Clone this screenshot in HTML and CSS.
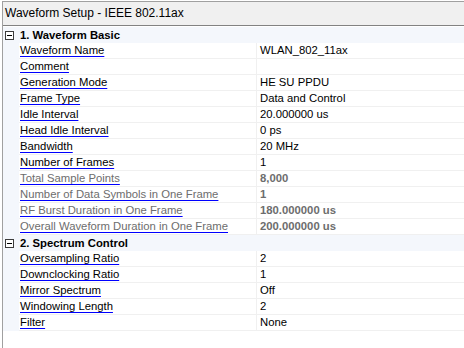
FILE: index.html
```html
<!DOCTYPE html>
<html>
<head>
<meta charset="utf-8">
<link rel="stylesheet" href="styles.css">
</head>
<body>
<div class="pane">
  <div class="title">Waveform Setup - IEEE 802.11ax</div>
  <div class="grid">
    <div class="cat"><span class="box"><span class="minus"></span></span><span class="cat-label">1. Waveform Basic</span></div>
    <div class="row"><div class="gutter"></div><div class="name"><span class="lbl">Waveform Name</span></div><div class="value">WLAN_802_11ax</div></div>
    <div class="row"><div class="gutter"></div><div class="name"><span class="lbl">Comment</span></div><div class="value"></div></div>
    <div class="row"><div class="gutter"></div><div class="name"><span class="lbl">Generation Mode</span></div><div class="value">HE SU PPDU</div></div>
    <div class="row"><div class="gutter"></div><div class="name"><span class="lbl">Frame Type</span></div><div class="value">Data and Control</div></div>
    <div class="row"><div class="gutter"></div><div class="name"><span class="lbl">Idle Interval</span></div><div class="value">20.000000 us</div></div>
    <div class="row"><div class="gutter"></div><div class="name"><span class="lbl">Head Idle Interval</span></div><div class="value">0 ps</div></div>
    <div class="row"><div class="gutter"></div><div class="name"><span class="lbl">Bandwidth</span></div><div class="value">20 MHz</div></div>
    <div class="row"><div class="gutter"></div><div class="name"><span class="lbl">Number of Frames</span></div><div class="value">1</div></div>
    <div class="row ro"><div class="gutter"></div><div class="name"><span class="lbl">Total Sample Points</span></div><div class="value">8,000</div></div>
    <div class="row ro"><div class="gutter"></div><div class="name"><span class="lbl">Number of Data Symbols in One Frame</span></div><div class="value">1</div></div>
    <div class="row ro"><div class="gutter"></div><div class="name"><span class="lbl">RF Burst Duration in One Frame</span></div><div class="value">180.000000 us</div></div>
    <div class="row ro"><div class="gutter"></div><div class="name"><span class="lbl">Overall Waveform Duration in One Frame</span></div><div class="value">200.000000 us</div></div>
    <div class="cat"><span class="box"><span class="minus"></span></span><span class="cat-label">2. Spectrum Control</span></div>
    <div class="row"><div class="gutter"></div><div class="name"><span class="lbl">Oversampling Ratio</span></div><div class="value">2</div></div>
    <div class="row"><div class="gutter"></div><div class="name"><span class="lbl">Downclocking Ratio</span></div><div class="value">1</div></div>
    <div class="row"><div class="gutter"></div><div class="name"><span class="lbl">Mirror Spectrum</span></div><div class="value">Off</div></div>
    <div class="row"><div class="gutter"></div><div class="name"><span class="lbl">Windowing Length</span></div><div class="value">2</div></div>
    <div class="row"><div class="gutter"></div><div class="name"><span class="lbl">Filter</span></div><div class="value">None</div></div>
  </div>
</div>
</body>
</html>
```
FILE: styles.css
```css
html, body {
  margin: 0;
  padding: 0;
  background: #ffffff;
}
body {
  font-family: "Liberation Sans", Arial, sans-serif;
  font-size: 11.3px;
  color: #000000;
}
.pane {
  margin-left: 2px;
  margin-top: 1px;
  height: 347px;
  border-left: 1px solid #a0a0a0;
  overflow: hidden;
}
.title {
  height: 23px;
  line-height: 23px;
  border-top: 1px solid #a0a0a0;
  border-bottom: 1px solid #828282;
  background: #f0f0f0;
  padding-left: 2px;
  font-size: 12px;
  white-space: nowrap;
}
.grid {
  display: flex;
  flex-direction: column;
  margin-top: 1px;
}
.cat {
  display: flex;
  align-items: flex-start;
  height: 16px;
  background: #f4f7fc;
}
.box {
  position: relative;
  box-sizing: border-box;
  width: 9px;
  height: 9px;
  margin: 4px 0 0 2px;
  border: 1px solid #3c3c3c;
  background: #ffffff;
  flex: none;
}
.minus {
  position: absolute;
  left: 1px;
  top: 3px;
  width: 5px;
  height: 1px;
  background: #000000;
}
.cat-label {
  margin-left: 6px;
  font-weight: bold;
  line-height: 16px;
  white-space: nowrap;
}
.row {
  display: flex;
  height: 16px;
}
.gutter {
  width: 16px;
  flex: none;
  background: #f4f7fc;
}
.name {
  box-sizing: border-box;
  width: 238px;
  flex: none;
  height: 16px;
  line-height: 15px;
  padding-left: 1px;
  border-bottom: 1px solid #f0f0f0;
  border-right: 1px solid #f0f0f0;
  white-space: nowrap;
  overflow: hidden;
}
.lbl {
  text-decoration: underline;
  text-decoration-color: #0000ff;
  text-underline-offset: 1.5px;
}
.value {
  box-sizing: border-box;
  flex: 1;
  height: 16px;
  line-height: 15px;
  padding-left: 3px;
  border-bottom: 1px solid #f0f0f0;
  white-space: nowrap;
}
.ro .name {
  color: #6d6d6d;
}
.ro .value {
  color: #6d6d6d;
  font-weight: bold;
}
```
